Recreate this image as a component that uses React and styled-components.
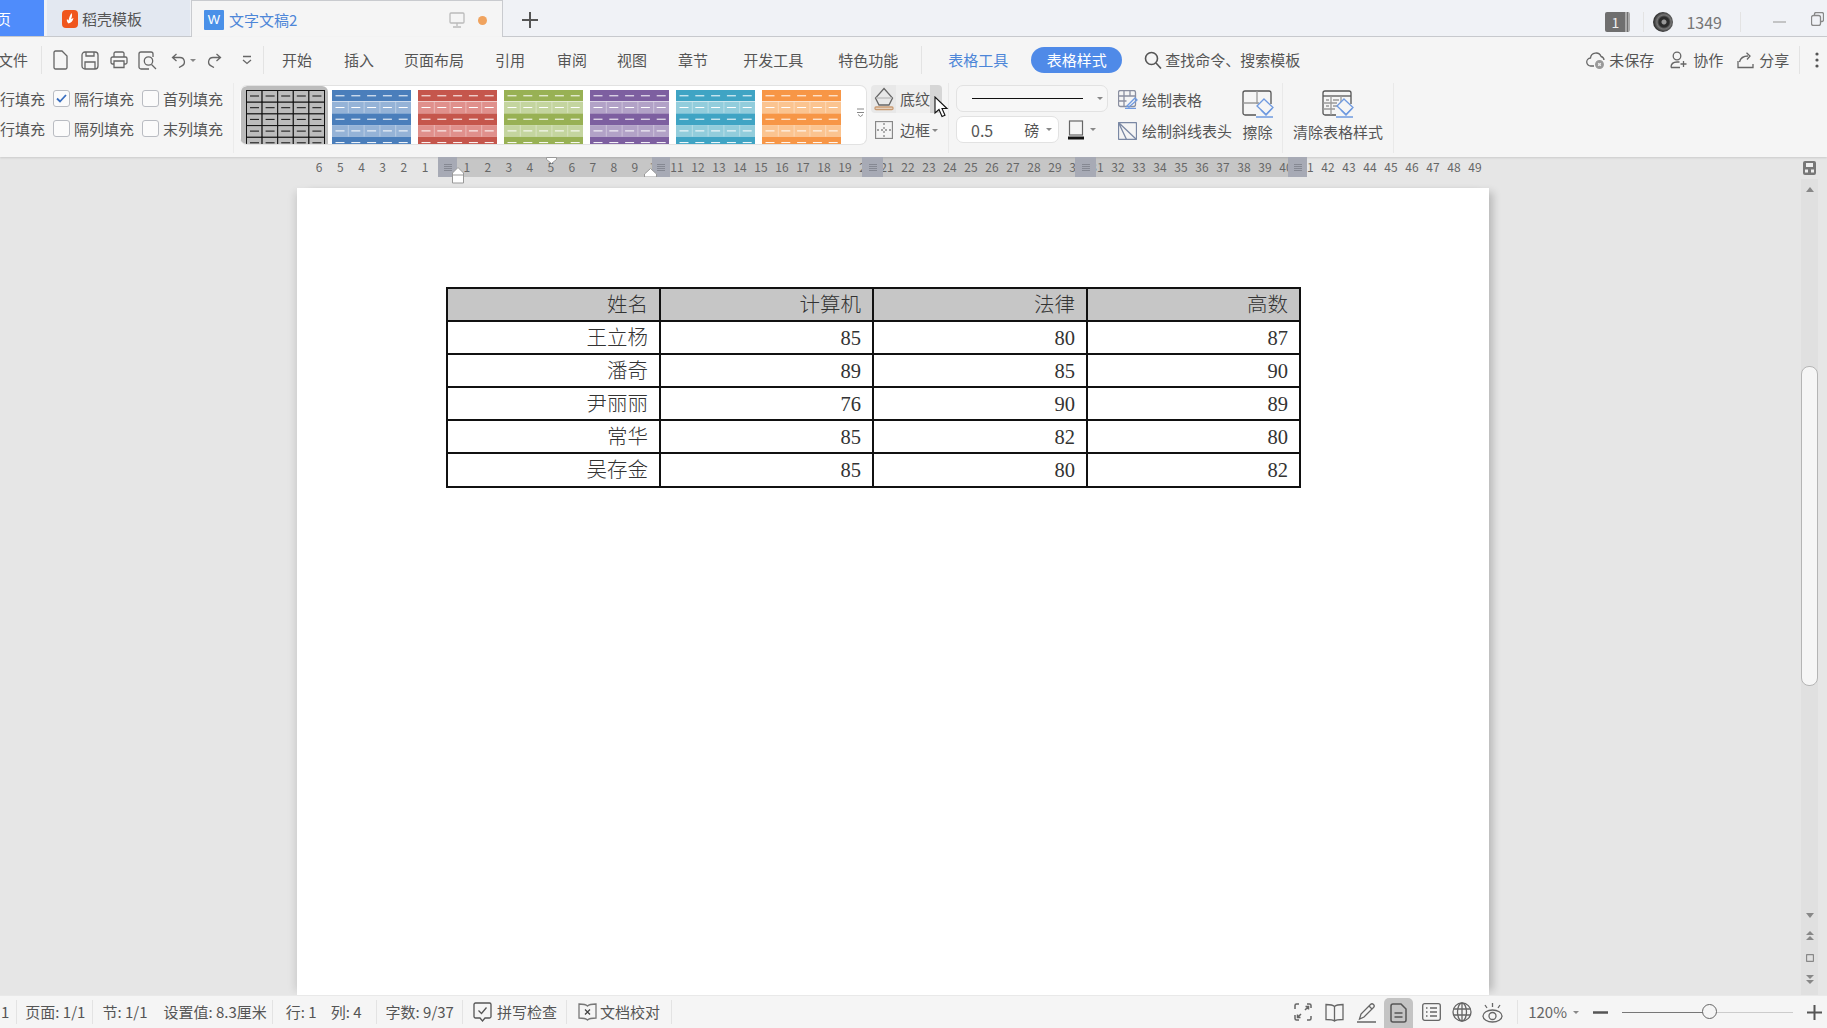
import styled, { createGlobalStyle } from 'styled-components';

const GlobalStyle = createGlobalStyle`
    html, body {
        margin: 0;
        padding: 0;
        background: #e6e6e6;
    }

    body {
        font-family: "Noto Sans CJK SC", "Noto Sans", sans-serif;
        font-size: 15px;
        color: #555;
    }
`;

const Page = styled.div`
    position: relative;
    width: 1827px;
    height: 1028px;
    overflow: hidden;
    display: flex;
    flex-direction: column;
`;

/* ---- shared bits ---- */

const Glyph = styled.svg`
    display: block;
    flex: none;
    fill: none;
    stroke: ${(p) => p.$stroke || '#666'};
    stroke-width: ${(p) => p.$sw || 1.3};
    margin-left: ${(p) => p.$ml || 0}px;
    margin-top: ${(p) => p.$mt || 0}px;
`;

const Label = styled.span`
    flex: none;
    white-space: nowrap;
    line-height: 20px;
    font-size: ${(p) => p.$size || 15}px;
    margin-left: ${(p) => p.$ml || 0}px;
    color: ${(p) => p.$color || '#555'};
`;

const Rule = styled.i`
    display: block;
    flex: none;
    width: 1px;
    height: ${(p) => p.$h || 28}px;
    margin-left: ${(p) => p.$ml || 0}px;
    background: ${(p) => p.$color || '#e3e3e3'};
`;

const Caret = styled.i`
    display: block;
    flex: none;
    width: 0;
    height: 0;
    margin-left: ${(p) => p.$ml || 0}px;
    border-left: 3px solid transparent;
    border-right: 3px solid transparent;
    border-top: 3.5px solid #888;
`;

/* ---- title bar ---- */

const TitleBar = styled.div`
    flex: none;
    height: 37px;
    box-sizing: border-box;
    display: flex;
    align-items: stretch;
    background: #f0f2f6;
    border-bottom: 1px solid #c9cbcf;
`;

const HomeTab = styled.div`
    width: 44px;
    overflow: hidden;
    background: #4f8cfb;
    color: #fff;
    line-height: 38px;
    text-indent: -4px;
`;

const TemplateTab = styled.div`
    width: 143px;
    margin-left: 3px;
    display: flex;
    align-items: center;
    padding: 2px 0 0 15px;
    box-sizing: border-box;
    background: #e3e8f1;
`;

const DocTab = styled.div`
    width: 312px;
    height: 37px;
    margin-left: 1px;
    box-sizing: border-box;
    display: flex;
    align-items: center;
    padding: 2px 0 0 12px;
    background: #f5f5f5;
    border: 1px solid #c9cbcf;
    border-bottom: none;
`;

const WordMark = styled.div`
    flex: none;
    width: 20px;
    height: 20px;
    border-radius: 1px;
    background: #4a90e8;
    color: #fff;
    font-family: "Liberation Sans", sans-serif;
    font-size: 13px;
    line-height: 20px;
    text-align: center;
`;

const UnsavedDot = styled.i`
    flex: none;
    width: 9px;
    height: 9px;
    margin-left: 13px;
    border-radius: 50%;
    background: #f0a35e;
`;

const TitleRight = styled.div`
    margin-left: auto;
    padding-top: 7px;
    display: flex;
    align-items: center;
`;

const CountBadge = styled.div`
    width: 20px;
    height: 20px;
    border-radius: 2px;
    background: #6f6f6f;
    color: #eee;
    font-size: 14px;
    line-height: 20px;
    text-align: center;
    border-right: 5px double #aaa;
`;

const Avatar = styled.div`
    width: 20px;
    height: 20px;
    margin-left: 9px;
    border-radius: 50%;
    background: radial-gradient(circle at 55% 50%, #999 0 2px, #2c2c2c 3px 5px, #777 7px, #333 10px);
`;

/* ---- ribbon ---- */

const Ribbon = styled.div`
    flex: none;
    height: 120px;
    background: #f5f5f5;
    box-shadow: 0 1px 2px rgba(0, 0, 0, 0.12);
    position: relative;
    z-index: 2;
`;

const MenuRow = styled.div`
    height: 46px;
    display: flex;
    align-items: center;
`;

const ActivePill = styled.div`
    flex: none;
    width: 91px;
    height: 26px;
    margin-left: 23px;
    border-radius: 13px;
    background: #4f8ae8;
    color: #fff;
    line-height: 26px;
    text-align: center;
`;

const ToolRow = styled.div`
    height: 74px;
    display: flex;
    align-items: flex-start;
`;

const Options = styled.div`
    width: 234px;
    height: 70px;
    flex: none;
    box-sizing: border-box;
    border-right: 1px solid #ebebeb;
    display: grid;
    grid-template-columns: 53px 89px 81px;
    grid-auto-rows: 30px;
    align-content: start;
`;

const Option = styled.div`
    display: flex;
    align-items: center;
    white-space: nowrap;
`;

const Check = styled.span`
    flex: none;
    width: 17px;
    height: 17px;
    margin-right: 4px;
    box-sizing: border-box;
    border: 1px solid #b9bcc2;
    border-radius: 3px;
    background: #fbfbfb;
    display: flex;
    align-items: center;
    justify-content: center;
`;

const Gallery = styled.div`
    width: 627px;
    height: 60px;
    flex: none;
    margin: 2px 0 0 6px;
    box-sizing: border-box;
    overflow: hidden;
    display: flex;
    align-items: flex-start;
    background: #fff;
    border: 1px solid #e2e2e2;
    border-radius: 7px;
    border-left: none;
`;

const PickedSwatch = styled.div`
    width: 87px;
    height: 60px;
    flex: none;
    margin-left: 1px;
    border-radius: 6px 6px 0 0;
    background: #bcbcbc;
    padding: 4px 0 0 5px;
    box-sizing: border-box;
`;

const SwatchSlot = styled.div`
    flex: none;
    margin: 4px 0 0 ${(p) => p.$ml}px;
`;

const GalleryMore = styled.div`
    margin: 22px 0 0 16px;
`;

const ShadeGroup = styled.div`
    width: 78px;
    height: 70px;
    flex: none;
    margin: 0 0 0 4px;
    padding-top: 2px;
    box-sizing: border-box;
    border-right: 1px solid #e9e9e9;
`;

const ShadeButton = styled.div`
    width: 71px;
    height: 28px;
    display: flex;
    align-items: center;
    padding-left: 3px;
    box-sizing: border-box;
    border-radius: 4px;
    background: linear-gradient(to right, #e8e8e8 0 25px, #efefef 25px 59px, #d6d6d6 59px);
`;

const BorderButton = styled.div`
    height: 28px;
    margin-top: 3px;
    display: flex;
    align-items: center;
    padding-left: 4px;
`;

const LineGroup = styled.div`
    width: 152px;
    flex: none;
    margin: 2px 0 0 7px;
`;

const LineSelect = styled.div`
    height: 27px;
    box-sizing: border-box;
    display: flex;
    align-items: center;
    padding-left: 15px;
    border: 1px solid #e2e2e2;
    border-radius: 7px;
    background: #f7f7f7;
`;

const LineSample = styled.i`
    display: block;
    width: 111px;
    height: 1px;
    background: #111;
`;

const WeightRow = styled.div`
    display: flex;
    align-items: center;
    margin-top: 4px;
`;

const WeightInput = styled.div`
    width: 103px;
    height: 27px;
    box-sizing: border-box;
    display: flex;
    align-items: center;
    padding-left: 14px;
    border: 1px solid #e2e2e2;
    border-radius: 7px;
    background: #fff;
`;

const DrawGroup = styled.div`
    flex: none;
    width: 115px;
    margin: 3px 0 0 10px;
`;

const DrawItem = styled.div`
    height: 27px;
    margin-bottom: 4px;
    display: flex;
    align-items: center;
`;

const BigTool = styled.div`
    flex: none;
    width: ${(p) => p.$w}px;
    height: 70px;
    box-sizing: border-box;
    padding-top: 7px;
    display: flex;
    flex-direction: column;
    align-items: center;
    border-right: 1px solid #e9e9e9;
`;

const BigLabel = styled.span`
    margin-top: 4px;
    line-height: 20px;
    white-space: nowrap;
`;

/* ---- ruler ---- */

const Ruler = styled.div`
    position: relative;
    flex: none;
    height: 20px;
    display: flex;
    font-size: 12px;
    line-height: 20px;
    color: #666;
    background: #e6e6e6;
`;

const RulerBand = styled.i`
    position: absolute;
    left: 457px;
    top: 0;
    width: 832px;
    height: 20px;
    background: #c6c6c6;
`;

const RulerMark = styled.i`
    position: absolute;
    left: ${(p) => p.$x}px;
    width: ${(p) => p.$w}px;
    top: 0;
    height: 20px;
    z-index: 2;
    background: #a7aab5;

    &::after {
        content: '';
        position: absolute;
        left: 50%;
        top: 7px;
        width: 8px;
        height: 7px;
        margin-left: -4px;
        background-image: repeating-linear-gradient(0deg, #7d808a 0 1px, transparent 1px 2px);
        opacity: 0.8;
    }
`;

const RulerNumbers = styled.div`
    position: relative;
    display: flex;
    margin-left: ${(p) => p.$ml}px;
`;

const RulerCell = styled.span`
    width: ${(p) => p.$w}px;
    flex: none;
    text-align: center;
`;

const RulerHandle = styled.svg`
    position: absolute;
    left: ${(p) => p.$x}px;
    top: ${(p) => p.$y}px;
    z-index: 3;
    fill: #fff;
    stroke: #999;
    stroke-width: 1;
`;

const RulerToggle = styled.svg`
    position: absolute;
    left: 1803px;
    top: 4px;
    fill: none;
`;

/* ---- document ---- */

const Workspace = styled.div`
    flex: 1;
    min-height: 0;
    display: flex;
    background: #e6e6e6;
    padding-top: 2px;
`;

const Sheet = styled.div`
    flex: none;
    width: 1192px;
    margin: 9px 0 0 297px;
    box-sizing: border-box;
    padding: 99px 0 0 149px;
    background: #fff;
    box-shadow: -6px 0 8px -4px rgba(0, 0, 0, 0.12), 8px 0 8px -4px rgba(0, 0, 0, 0.2);
`;

const ScoreTable = styled.table`
    width: 853px;
    table-layout: fixed;
    border-collapse: collapse;
    border: 2px solid #111;
    font-family: "Liberation Serif", "Noto Sans CJK SC", serif;
    font-size: 20.5px;
    color: #333;

    th, td {
        height: 33.1px;
        box-sizing: border-box;
        padding: 0 11px 0 0;
        border: 2px solid #111;
        text-align: right;
        font-weight: 300;
        line-height: 24px;
    }

    th {
        background: #c6c6c6;
    }
`;

const ScrollTrack = styled.div`
    flex: none;
    width: 17px;
    margin-left: 312px;
    display: flex;
    flex-direction: column;
    align-items: center;
    background: #e0e0e0;
`;

const ScrollCap = styled.div`
    height: 187px;
    padding-top: 8px;
    box-sizing: border-box;
`;

const ScrollThumb = styled.div`
    flex: none;
    width: 17px;
    height: 320px;
    box-sizing: border-box;
    border: 1px solid #b5b5b5;
    border-radius: 8px;
    background: #f6f6f6;
`;

const ScrollEnd = styled.div`
    margin-top: auto;
    display: flex;
    flex-direction: column;
    align-items: center;
    gap: 13px;
    padding-bottom: 10px;
`;

/* ---- status bar ---- */

const StatusBar = styled.div`
    flex: none;
    height: 33px;
    box-sizing: border-box;
    display: flex;
    align-items: center;
    background: #f5f5f5;
    border-top: 1px solid #e9e9e9;
`;

const StatusRight = styled.div`
    margin-left: auto;
    padding-right: 5px;
    display: flex;
    align-items: center;
`;

const ViewButton = styled.div`
    flex: none;
    width: 29px;
    height: 30px;
    margin: 1px 0 0 8px;
    border-radius: 5px 5px 0 0;
    background: #c4c4c4;
    display: flex;
    align-items: center;
    justify-content: center;
`;

const ZoomTrack = styled.div`
    position: relative;
    flex: none;
    width: 171px;
    height: 1px;
    margin-left: 14px;
    background: linear-gradient(to right, #777 0 88px, #ccc 88px);
`;

const ZoomKnob = styled.i`
    position: absolute;
    left: 80px;
    top: -8px;
    width: 15px;
    height: 15px;
    box-sizing: border-box;
    border: 1.5px solid #666;
    border-radius: 50%;
    background: #f5f5f5;
`;

const Pointer = styled.svg`
    position: absolute;
    left: 934px;
    top: 96px;
    z-index: 5;
`;

/* ---- drawings ---- */

const Swatch = ({ dark, light }) => (
    <svg width="79" height="56" viewBox="0 0 79 56" style={{ display: 'block' }}>
        {[0, 1, 2, 3, 4].map((row) => (
            <g key={row} transform={`translate(0 ${row * 11.7})`}>
                <rect width="79" height="11.7" fill={row % 2 ? light : dark} />
                {[0, 1, 2, 3, 4].map((col) => (
                    <g key={col}>
                        <rect x={col * 15.8 + 3.5} y="5.3" width="9" height="1" fill="#fff" />
                        {row % 2 === 1 && col > 0 && (
                            <rect x={col * 15.8} width="1" height="11.7" fill="#fff" opacity=".35" />
                        )}
                    </g>
                ))}
                {row === 0 && <rect y="11.2" width="79" height=".8" fill="#fff" />}
            </g>
        ))}
    </svg>
);

const GridSwatch = () => (
    <svg width="79" height="56" viewBox="0 0 79 56" style={{ display: 'block' }}>
        {[0, 1, 2, 3, 4].map((row) =>
            [0, 1, 2, 3, 4].map((col) => (
                <g key={`${row}-${col}`}>
                    <rect x={col * 15.6 + 0.5} y={row * 11.7 + 0.5} width="15.6" height="11.7" fill="#bcbcbc" stroke="#111" />
                    <rect x={col * 15.6 + 4} y={row * 11.7 + 5.5} width="9" height="1" fill="#111" />
                </g>
            ))
        )}
    </svg>
);

const swatches = [
    { id: 'blue', dark: '#4a7ebb', light: '#95b3d7' },
    { id: 'red', dark: '#c5564c', light: '#e0908c' },
    { id: 'green', dark: '#98b154', light: '#c4d59f' },
    { id: 'purple', dark: '#7d5fa0', light: '#b2a2c7' },
    { id: 'teal', dark: '#3fa4c4', light: '#92cddc' },
    { id: 'orange', dark: '#f79646', light: '#fbc490' },
];

const NewIcon = (p) => (
    <Glyph width="15" height="20" viewBox="0 0 15 20" {...p}>
        <path d="M1 2.5a1.5 1.5 0 0 1 1.5-1.5H9l5 5v11.5a1.5 1.5 0 0 1-1.5 1.5h-10A1.5 1.5 0 0 1 1 17.5z" />
    </Glyph>
);
const SaveIcon = (p) => (
    <Glyph width="18" height="19" viewBox="0 0 18 19" {...p}>
        <rect x="1" y="1" width="16" height="17" rx="3" />
        <path d="M5 1v4h8V1M4 18v-7h10v7" />
    </Glyph>
);
const PrintIcon = (p) => (
    <Glyph width="18" height="18" viewBox="0 0 18 18" {...p}>
        <path d="M4 6V2.5A1.5 1.5 0 0 1 5.5 1h7A1.5 1.5 0 0 1 14 2.5V6M4 13H2.5A1.5 1.5 0 0 1 1 11.5v-4A1.5 1.5 0 0 1 2.5 6h13A1.5 1.5 0 0 1 17 7.5v4a1.5 1.5 0 0 1-1.5 1.5H14" />
        <path d="M4 10h10v6.5H4z" />
    </Glyph>
);
const PreviewIcon = (p) => (
    <Glyph width="20" height="19" viewBox="0 0 20 19" {...p}>
        <path d="M11 18H3a2 2 0 0 1-2-2V3a2 2 0 0 1 2-2h10a2 2 0 0 1 2 2v3" />
        <circle cx="10.5" cy="10" r="4.2" />
        <path d="M13.5 13.5l4.5 4.5" />
    </Glyph>
);
const UndoIcon = (p) => (
    <Glyph width="15" height="15" viewBox="0 0 15 15" {...p}>
        <path d="M5.5 1L1.5 4.5l4 3.5M1.5 4.5H9a4.5 4.5 0 0 1 1.5 8.7L8 14.5" />
    </Glyph>
);
const RedoIcon = (p) => (
    <Glyph width="15" height="15" viewBox="0 0 15 15" {...p}>
        <path d="M9.5 1l4 3.5-4 3.5M13.5 4.5H6a4.5 4.5 0 0 0-1.5 8.7L7 14.5" />
    </Glyph>
);
const MoreIcon = (p) => (
    <Glyph width="10" height="10" viewBox="0 0 10 10" {...p}>
        <path d="M1 1.5h8M1 5l4 3.5L9 5" />
    </Glyph>
);
const SearchIcon = (p) => (
    <Glyph width="18" height="18" viewBox="0 0 18 18" $sw="1.6" $stroke="#555" {...p}>
        <circle cx="7.5" cy="7.5" r="6" />
        <path d="M12 12l5 5.5" />
    </Glyph>
);
const CloudIcon = (p) => (
    <Glyph width="20" height="20" viewBox="0 0 20 20" {...p}>
        <path d="M8 16H5a4 4 0 0 1-.5-8 5.5 5.5 0 0 1 10.6-1.5A4 4 0 0 1 18 10" />
        <circle cx="13.5" cy="14.5" r="3.8" fill="#999" stroke="#999" />
        <path d="M12.2 13.2l2.6 2.6m0-2.6l-2.6 2.6" stroke="#eee" />
    </Glyph>
);
const CollabIcon = (p) => (
    <Glyph width="17" height="18" viewBox="0 0 17 18" {...p}>
        <circle cx="7" cy="5" r="3.8" />
        <path d="M1 16.5c0-3.5 2.5-5.5 6-5.5h2.5M1 16.5h9M13.5 10v6M10.5 13h6" />
    </Glyph>
);
const ShareIcon = (p) => (
    <Glyph width="17" height="17" viewBox="0 0 17 17" {...p}>
        <path d="M1 9v6.5h15V12M2.5 10c1-4 4-6 8.5-6M9.5 .8L13 4l-3 3.5" />
    </Glyph>
);
const BucketIcon = (p) => (
    <Glyph width="21" height="24" viewBox="0 0 21 24" $stroke="#666" {...p}>
        <path d="M10 1.5l8.5 9.5-3.5 7H5l-3.5-7z" />
        <path d="M2 11h16" stroke="#bbb" />
        <rect x="1" y="20" width="18" height="2.5" rx="1" stroke="#c99b72" fill="#eee2d6" />
    </Glyph>
);
const BorderIcon = (p) => (
    <Glyph width="18" height="18" viewBox="0 0 18 18" $stroke="#888" {...p}>
        <rect x=".5" y=".5" width="17" height="17" />
        <path d="M9 2v14M2 9h14" strokeDasharray="2 2" />
    </Glyph>
);
const PenColorIcon = (p) => (
    <Glyph width="18" height="20" viewBox="0 0 18 20" $sw="1.2" {...p}>
        <rect x="2.5" y="1" width="13" height="14" />
        <path d="M1 18h16" stroke="#111" strokeWidth="3" />
    </Glyph>
);
const DrawTableIcon = (p) => (
    <Glyph width="20" height="19" viewBox="0 0 20 19" $stroke="#8a8fa0" {...p}>
        <rect x=".5" y=".5" width="17" height="16" rx="2" />
        <path d="M.5 6h17M.5 11h8M6 .5V16M12 .5v6" />
        <path d="M7 18.5h11M9 16l8-8 2 2-8 7z" stroke="#6f9ae0" />
    </Glyph>
);
const DiagonalIcon = (p) => (
    <Glyph width="19" height="18" viewBox="0 0 19 18" $stroke="#7a88a4" {...p}>
        <rect x=".5" y=".5" width="18" height="17" rx="1" />
        <path d="M.5 .5l18 17M.5 .5l8 17" />
    </Glyph>
);
const EraserIcon = (p) => (
    <Glyph width="32" height="28" viewBox="0 0 32 28" $stroke="#555" {...p}>
        <path d="M14 25H3a2 2 0 0 1-2-2V3a2 2 0 0 1 2-2h24a2 2 0 0 1 2 2v11" />
        <path d="M15 1v13M1 13h16" stroke="#999" />
        <path d="M22 9l9 8.5-7 7-9-8.5z" fill="#f5f5f5" stroke="#6f9ae0" />
        <path d="M19 20l5 5 6-6.5M14 27h17" stroke="#6f9ae0" />
    </Glyph>
);
const ClearStyleIcon = (p) => (
    <Glyph width="32" height="28" viewBox="0 0 32 28" $stroke="#555" {...p}>
        <path d="M14 25H3a2 2 0 0 1-2-2V3a2 2 0 0 1 2-2h24a2 2 0 0 1 2 2v11" />
        <path d="M1 6h28" />
        <path d="M1 13h14M1 19h12M9 6v19M19 6v6" stroke="#999" />
        <path d="M4 10h3M11 10h6M4 16h3M11 16h4" stroke="#999" />
        <path d="M22 9l9 8.5-7 7-9-8.5z" fill="#f5f5f5" stroke="#6f9ae0" />
        <path d="M19 20l5 5 6-6.5M14 27h17" stroke="#6f9ae0" />
    </Glyph>
);
const SpellIcon = (p) => (
    <Glyph width="19" height="20" viewBox="0 0 19 20" $stroke="#555" {...p}>
        <path d="M7 16H2.5A1.5 1.5 0 0 1 1 14.5v-12A1.5 1.5 0 0 1 2.5 1h14A1.5 1.5 0 0 1 18 2.5v12a1.5 1.5 0 0 1-1.5 1.5H12l-2.5 3z" />
        <path d="M5.5 8.500l3 3 5-6" />
    </Glyph>
);
const ProofIcon = (p) => (
    <Glyph width="19" height="18" viewBox="0 0 19 18" $stroke="#777" {...p}>
        <path d="M9.5 3C8 1.500 5 1 1 1v14c4 0 7 .5 8.500 2 1.500-1.500 4.500-2 8.500-2V1c-4 0-7 .5-8.500 2z" />
        <path d="M7 6.5l5 5m0-5l-5 5" stroke="#444" />
    </Glyph>
);
const FullIcon = (p) => (
    <Glyph width="18" height="18" viewBox="0 0 18 18" $sw="1.5" {...p}>
        <path d="M1 6V2.5A1.5 1.5 0 0 1 2.5 1H5M13 1h2.500A1.500 1.500 0 0 1 17 2.500V5M17 13v2.500a1.500 1.500 0 0 1-1.500 1.500H13M5 17H2.500A1.500 1.500 0 0 1 1 15.500V12" />
        <path d="M11 7l3.5-3.500M11.500 3.500h3v3M7 11l-3.500 3.500M3.500 11.500v3h3" />
    </Glyph>
);
const BookIcon = (p) => (
    <Glyph width="19" height="19" viewBox="0 0 19 19" {...p}>
        <path d="M9.5 3.500C8 2 5 1.500 1 1.500v15c4 0 7 0 8.500 1.500 1.500-1.500 4.500-1.500 8.500-1.500v-15c-4 0-7 .5-8.500 2zM9.500 3.500V18" />
    </Glyph>
);
const PenIcon = (p) => (
    <Glyph width="19" height="21" viewBox="0 0 19 21" {...p}>
        <path d="M2.5 17L4 12l9.500-9.500a2 2 0 0 1 3 3L7 15z" />
        <path d="M12 4l3 3M0 20h19" />
    </Glyph>
);
const PageIcon = (p) => (
    <Glyph width="17" height="20" viewBox="0 0 17 20" $stroke="#555" $sw="1.5" {...p}>
        <path d="M1 3a2 2 0 0 1 2-2h8l5 5v11a2 2 0 0 1-2 2H3a2 2 0 0 1-2-2z" />
        <path d="M4.5 10h8M4.5 14h8" />
    </Glyph>
);
const OutlineIcon = (p) => (
    <Glyph width="19" height="18" viewBox="0 0 19 18" {...p}>
        <rect x=".7" y=".7" width="17.6" height="16.6" rx="2" />
        <path d="M4 5h1.500M4 9h1.500M4 13h1.500M8 5h7M8 9h7M8 13h7" />
    </Glyph>
);
const GlobeIcon = (p) => (
    <Glyph width="20" height="20" viewBox="0 0 20 20" {...p}>
        <circle cx="10" cy="10" r="9" />
        <ellipse cx="10" cy="10" rx="4.5" ry="9" />
        <path d="M10 1v18M1.500 7h17M1.500 13h17" />
    </Glyph>
);
const EyeIcon = (p) => (
    <Glyph width="21" height="21" viewBox="0 0 21 21" {...p}>
        <ellipse cx="10.5" cy="14" rx="9.5" ry="6" />
        <circle cx="10.5" cy="14" r="3.5" />
        <path d="M10.5 1v4M3 3l2 3M18 3l-2 3" />
    </Glyph>
);
const UpArrow = () => (
    <Glyph width="8" height="5" viewBox="0 0 8 5" $stroke="none">
        <path d="M4 0l4 5H0z" fill="#888" />
    </Glyph>
);
const DownArrow = () => (
    <Glyph width="8" height="5" viewBox="0 0 8 5" $stroke="none">
        <path d="M4 5l4-5H0z" fill="#888" />
    </Glyph>
);

const rulerLeft = [6, 5, 4, 3, 2, 1];
const rulerRight = Array.from({ length: 49 }, (_, i) => i + 1);

const rows = [
    ['王立杨', 85, 80, 87],
    ['潘奇', 89, 85, 90],
    ['尹丽丽', 76, 90, 89],
    ['常华', 85, 82, 80],
    ['吴存金', 85, 80, 82],
];

const App = () => (
    <Page>
        <GlobalStyle />
        <TitleBar>
            <HomeTab>页</HomeTab>
            <TemplateTab>
                <Glyph width="16" height="18" viewBox="0 0 16 18" $stroke="none">
                    <rect width="16" height="18" rx="4" fill="#f0561d" />
                    <path d="M9.5 3c1 2 .5 4-.5 6l2.5-1c-.5 3-2.5 5-5 5.5C5 12 4.5 10.5 5 9l1.5 1.5C7 8 8 5 9.5 3z" fill="#fff" />
                </Glyph>
                <Label $ml={4}>稻壳模板</Label>
            </TemplateTab>
            <DocTab>
                <WordMark>W</WordMark>
                <Label $ml={5} $color="#4d86d8">文字文稿2</Label>
                <Glyph width="16" height="16" viewBox="0 0 16 16" $stroke="#bbb" $ml={152}>
                    <rect x="1" y="1" width="14" height="10" rx="1" />
                    <path d="M8 11v3M4 15h8" />
                </Glyph>
                <UnsavedDot />
            </DocTab>
            <Glyph width="16" height="16" viewBox="0 0 16 16" $stroke="#555" $sw="2" $ml={19} $mt={12}>
                <path d="M8 0v16M0 8h16" />
            </Glyph>
            <TitleRight>
                <CountBadge>1</CountBadge>
                <Rule $ml={13} $h={20} />
                <Avatar />
                <Label $ml={13} $size={16} $color="#777">1349</Label>
                <Rule $ml={18} $h={20} />
                <Glyph width="13" height="2" viewBox="0 0 13 2" $stroke="#aaa" $ml={32}>
                    <path d="M0 1h13" />
                </Glyph>
                <Glyph width="13" height="14" viewBox="0 0 13 14" $stroke="#888" $ml={25} $mt={-6}>
                    <rect x=".5" y="3.5" width="9" height="10" rx="2" />
                    <path d="M3.5 3V2A1.5 1.5 0 0 1 5 .5h6A1.5 1.5 0 0 1 12.5 2v6A1.5 1.5 0 0 1 11 9.5h-1" />
                </Glyph>
                <Rule $ml={2} $h={1} $color="transparent" />
            </TitleRight>
        </TitleBar>

        <Ribbon>
            <MenuRow>
                <Label $ml={-2}>文件</Label>
                <Rule $ml={13} />
                <NewIcon $ml={11} />
                <SaveIcon $ml={13} />
                <PrintIcon $ml={11} />
                <PreviewIcon $ml={10} />
                <UndoIcon $ml={13} />
                <Caret $ml={4} />
                <RedoIcon $ml={11} />
                <MoreIcon $ml={20} />
                <Rule $ml={11} />
                <Label $ml={18}>开始</Label>
                <Label $ml={32}>插入</Label>
                <Label $ml={30}>页面布局</Label>
                <Label $ml={31}>引用</Label>
                <Label $ml={32}>审阅</Label>
                <Label $ml={30}>视图</Label>
                <Label $ml={31}>章节</Label>
                <Label $ml={35}>开发工具</Label>
                <Label $ml={35}>特色功能</Label>
                <Rule $ml={23} />
                <Label $ml={26} $color="#4d86d8">表格工具</Label>
                <ActivePill>表格样式</ActivePill>
                <SearchIcon $ml={22} />
                <Label $ml={3}>查找命令、搜索模板</Label>
                <CloudIcon $ml={286} />
                <Label $ml={3}>未保存</Label>
                <CollabIcon $ml={16} />
                <Label $ml={6}>协作</Label>
                <ShareIcon $ml={14} />
                <Label $ml={5}>分享</Label>
                <Rule $ml={10} />
                <Glyph width="4" height="16" viewBox="0 0 4 16" $stroke="none" $ml={15}>
                    <circle cx="2" cy="2" r="1.6" fill="#555" />
                    <circle cx="2" cy="8" r="1.6" fill="#555" />
                    <circle cx="2" cy="14" r="1.6" fill="#555" />
                </Glyph>
            </MenuRow>

            <ToolRow>
                <Options>
                    <Option>行填充</Option>
                    <Option>
                        <Check>
                            <Glyph width="11" height="9" viewBox="0 0 11 9" $stroke="#3a6fc0" $sw="1.8">
                                <path d="M1 4.5l3 3 6-6.5" />
                            </Glyph>
                        </Check>
                        隔行填充
                    </Option>
                    <Option><Check />首列填充</Option>
                    <Option>行填充</Option>
                    <Option><Check />隔列填充</Option>
                    <Option><Check />末列填充</Option>
                </Options>

                <Gallery>
                    <PickedSwatch><GridSwatch /></PickedSwatch>
                    {swatches.map((s, i) => (
                        <SwatchSlot key={s.id} $ml={i === 0 ? 4 : 7}>
                            <Swatch dark={s.dark} light={s.light} />
                        </SwatchSlot>
                    ))}
                    <GalleryMore>
                        <Glyph width="7" height="9" viewBox="0 0 7 9" $stroke="#888" $sw="1">
                            <path d="M0 1h7M0 4.5h7M1 6.5l2.5 2 2.5-2" />
                        </Glyph>
                    </GalleryMore>
                </Gallery>

                <ShadeGroup>
                    <ShadeButton>
                        <BucketIcon />
                        <Label $ml={5}>底纹</Label>
                    </ShadeButton>
                    <BorderButton>
                        <BorderIcon />
                        <Label $ml={7}>边框</Label>
                        <Caret $ml={2} />
                    </BorderButton>
                </ShadeGroup>

                <LineGroup>
                    <LineSelect>
                        <LineSample />
                        <Caret $ml={14} />
                    </LineSelect>
                    <WeightRow>
                        <WeightInput>
                            <Label $size={16}>0.5</Label>
                            <Label $ml={31}>磅</Label>
                            <Caret $ml={7} />
                        </WeightInput>
                        <PenColorIcon $ml={8} />
                        <Caret $ml={5} />
                    </WeightRow>
                </LineGroup>

                <DrawGroup>
                    <DrawItem>
                        <DrawTableIcon />
                        <Label $ml={4}>绘制表格</Label>
                    </DrawItem>
                    <DrawItem>
                        <DiagonalIcon />
                        <Label $ml={5}>绘制斜线表头</Label>
                    </DrawItem>
                </DrawGroup>

                <BigTool $w={50}>
                    <EraserIcon />
                    <BigLabel>擦除</BigLabel>
                </BigTool>
                <BigTool $w={111}>
                    <ClearStyleIcon />
                    <BigLabel>清除表格样式</BigLabel>
                </BigTool>
            </ToolRow>
        </Ribbon>

        <Ruler>
            <RulerBand />
            <RulerMark $x={438} $w={19} />
            <RulerMark $x={652} $w={18} />
            <RulerMark $x={862} $w={21} />
            <RulerMark $x={1075} $w={21} />
            <RulerMark $x={1288} $w={19} />
            <RulerNumbers $ml={308.5}>
                {rulerLeft.map((n) => <RulerCell key={n} $w={21.2}>{n}</RulerCell>)}
            </RulerNumbers>
            <RulerNumbers $ml={20.8}>
                {rulerRight.map((n) => <RulerCell key={n} $w={21}>{n}</RulerCell>)}
            </RulerNumbers>
            <RulerHandle $x={452} $y={10} width="12" height="17" viewBox="0 0 12 17">
                <path d="M.5 6L6 .5 11.5 6v10H.5zM.5 8h11" />
            </RulerHandle>
            <RulerHandle $x={546} $y={0} width="11" height="7" viewBox="0 0 11 7">
                <path d="M.5 .5h10v2L5.5 6.5 .5 2.5z" />
            </RulerHandle>
            <RulerHandle $x={644} $y={11} width="13" height="9" viewBox="0 0 13 9">
                <path d="M6.5 .5L12.5 6v3H.5V6z" />
            </RulerHandle>
            <RulerToggle width="13" height="14" viewBox="0 0 13 14">
                <rect width="13" height="14" rx="2" fill="#777" />
                <rect x="3" y="2" width="7" height="4" fill="#eee" />
                <rect x="2" y="8.5" width="3" height="3" fill="#eee" />
                <rect x="8" y="8.5" width="3" height="3" fill="#eee" />
            </RulerToggle>
        </Ruler>

        <Workspace>
            <Sheet>
                <ScoreTable>
                    <colgroup>
                        <col style={{ width: 213 }} />
                        <col style={{ width: 213 }} />
                        <col style={{ width: 214 }} />
                        <col style={{ width: 213 }} />
                    </colgroup>
                    <thead>
                        <tr>
                            <th>姓名</th>
                            <th>计算机</th>
                            <th>法律</th>
                            <th>高数</th>
                        </tr>
                    </thead>
                    <tbody>
                        {rows.map((row) => (
                            <tr key={row[0]}>
                                {row.map((cell, i) => <td key={i}>{cell}</td>)}
                            </tr>
                        ))}
                    </tbody>
                </ScoreTable>
            </Sheet>
            <ScrollTrack>
                <ScrollCap><UpArrow /></ScrollCap>
                <ScrollThumb />
                <ScrollEnd>
                    <DownArrow />
                    <Glyph width="8" height="10" viewBox="0 0 8 10" $stroke="none">
                        <path d="M4 0l4 4H0zM4 5l4 4H0z" fill="#888" />
                    </Glyph>
                    <Glyph width="8" height="8" viewBox="0 0 8 8" $stroke="#888">
                        <rect x=".5" y=".5" width="7" height="7" rx="1" />
                    </Glyph>
                    <Glyph width="8" height="10" viewBox="0 0 8 10" $stroke="none">
                        <path d="M4 4l4-4H0zM4 9l4-4H0z" fill="#888" />
                    </Glyph>
                </ScrollEnd>
            </ScrollTrack>
        </Workspace>

        <StatusBar>
            <Label $ml={1}>1</Label>
            <Rule $ml={7} $h={24} />
            <Label $ml={8}>页面: 1/1</Label>
            <Rule $ml={7} $h={24} />
            <Label $ml={9}>节: 1/1</Label>
            <Label $ml={16}>设置值: 8.3厘米</Label>
            <Rule $ml={5} $h={24} />
            <Label $ml={13}>行: 1</Label>
            <Label $ml={14}>列: 4</Label>
            <Rule $ml={14} $h={24} />
            <Label $ml={9}>字数: 9/37</Label>
            <Rule $ml={8} $h={24} />
            <SpellIcon $ml={10} />
            <Label $ml={5}>拼写检查</Label>
            <Rule $ml={9} $h={24} />
            <ProofIcon $ml={11} />
            <Label $ml={3}>文档校对</Label>
            <Rule $ml={11} $h={24} />
            <StatusRight>
                <FullIcon />
                <BookIcon $ml={13} />
                <PenIcon $ml={13} />
                <ViewButton><PageIcon /></ViewButton>
                <OutlineIcon $ml={9} />
                <GlobeIcon $ml={11} />
                <EyeIcon $ml={10} />
                <Rule $ml={14} $h={24} />
                <Label $ml={10} $color="#666">120%</Label>
                <Caret $ml={6} />
                <Glyph width="15" height="3" viewBox="0 0 15 3" $stroke="#555" $sw="2.5" $ml={14}>
                    <path d="M0 1.5h15" />
                </Glyph>
                <ZoomTrack><ZoomKnob /></ZoomTrack>
                <Glyph width="15" height="15" viewBox="0 0 15 15" $stroke="#555" $sw="2" $ml={14}>
                    <path d="M7.5 0v15M0 7.5h15" />
                </Glyph>
            </StatusRight>
        </StatusBar>

        <Pointer width="15" height="23" viewBox="0 0 15 23">
            <path d="M1 1v16l4-3.5 3 7 3-1.300-3-6.700h5z" fill="#fff" stroke="#111" strokeWidth="1.1" />
        </Pointer>
    </Page>
);

export default App;
